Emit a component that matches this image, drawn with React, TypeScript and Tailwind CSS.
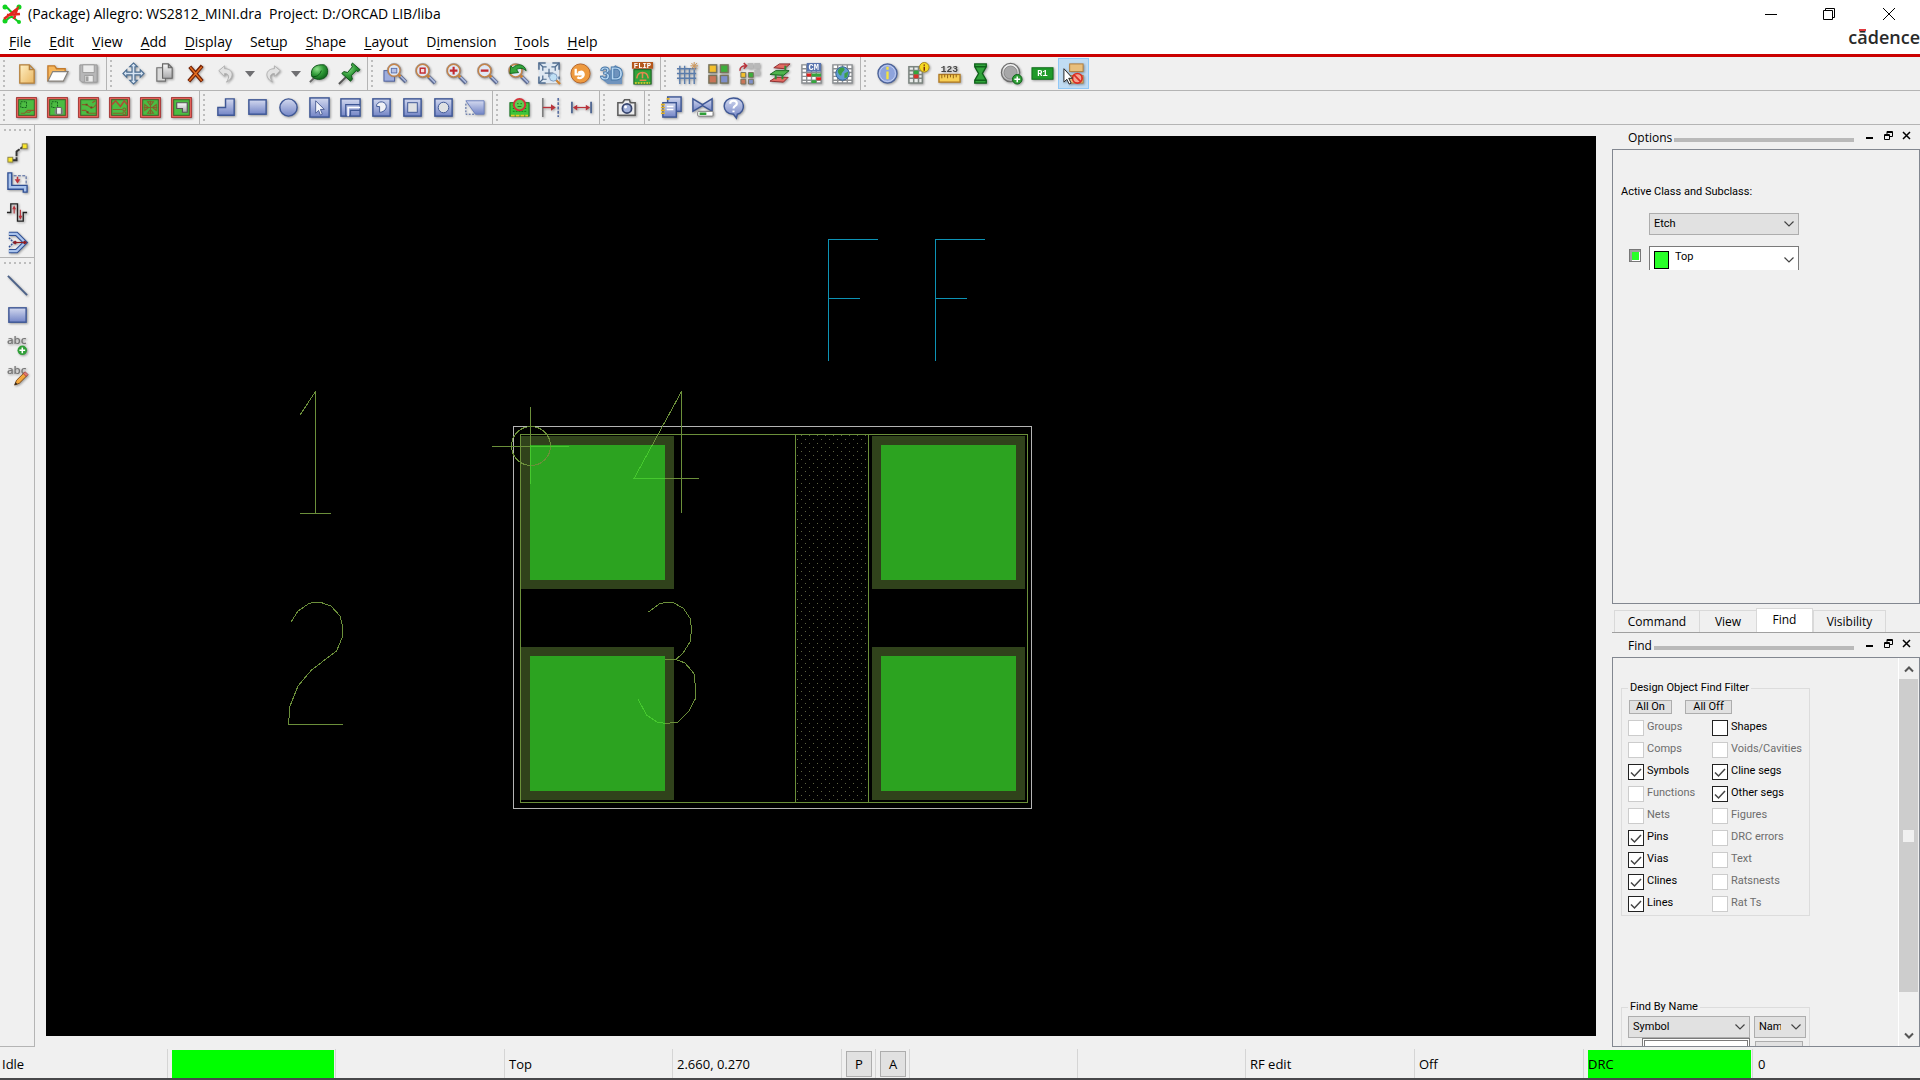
import React from 'react';
import clsx from 'clsx';

const UI = "font-['Open_Sans','Noto_Sans',sans-serif]";
const SMALL = "font-['Roboto','Liberation_Sans',sans-serif]";

/* ---------- icon parts ---------- */

const Defs = () => (
  <svg className="absolute h-0 w-0" aria-hidden="true">
    <defs>
      <linearGradient id="blue" x1="0" y1="0" x2="0" y2="1">
        <stop offset="0" stopColor="#d3d9ef" />
        <stop offset="1" stopColor="#7385c6" />
      </linearGradient>
      <linearGradient id="paper" x1="0" y1="0" x2="1" y2="1">
        <stop offset="0" stopColor="#fff0c4" />
        <stop offset="1" stopColor="#e9b661" />
      </linearGradient>
      <linearGradient id="grey" x1="0" y1="0" x2="0" y2="1">
        <stop offset="0" stopColor="#fafafa" />
        <stop offset="1" stopColor="#a9a9ab" />
      </linearGradient>
      <radialGradient id="leaf" cx="0.35" cy="0.3" r="0.8">
        <stop offset="0" stopColor="#8ee08a" />
        <stop offset="0.5" stopColor="#2f9a37" />
        <stop offset="1" stopColor="#0b5a17" />
      </radialGradient>
      <pattern id="hatch" width="8" height="8" x="801" y="435" patternUnits="userSpaceOnUse">
        <rect width="1" height="1" fill="#5c6140" />
        <rect x="4" y="4" width="1" height="1" fill="#5c6140" />
      </pattern>
      <clipPath id="pads">
        <path d="M530 445h135v135h-135zM530 656h135v135h-135z" />
      </clipPath>
    </defs>
  </svg>
);

const Pcb = ({ children }: { children: React.ReactNode }) => (
  <>
    <rect x="1" y="1" width="22" height="22" rx="1" fill="#8d2c2e" />
    <rect x="2.5" y="2.5" width="19" height="19" fill="none" stroke="#e2625a" strokeWidth="1.6" />
    <rect x="4" y="4" width="16" height="16" fill="#4cbc42" stroke="#2a7a2c" strokeWidth="0.8" />
    {children}
  </>
);

const Lens = ({ children }: { children?: React.ReactNode }) => (
  <>
    <path d="M15 15l7 7" stroke="#5c6a92" strokeWidth="4" />
    <path d="M15 14.5l7 7" stroke="#aebbdd" strokeWidth="1.6" />
    <path d="M13 13l3 3" stroke="#d08330" strokeWidth="3" />
    <circle cx="9" cy="9" r="6.6" fill="#dfe8f5" stroke="#c98545" strokeWidth="1.6" />
    <circle cx="9" cy="9" r="7.5" fill="none" stroke="#8a7a78" strokeWidth="0.6" />
    {children}
  </>
);

const Sheet = () => (
  <path d="M2 3h20v19H2zM2 7h20M2 11h20M2 15h20M2 19h20M7 3v19M12 3v19M17 3v19" fill="#fff" stroke="#8b8f92" strokeWidth="1.5" />
);

const wire = { fill: 'none', stroke: '#86602a', strokeWidth: 1.1 };
const box = { fill: 'url(#blue)', stroke: '#3e5795', strokeWidth: 1.5 };

const icons: Record<string, React.ReactNode> = {
  new: <path d="M5 3h10l5 5v14H5zM15 3v5h5" fill="url(#paper)" stroke="#b5803a" strokeWidth="1.4" />,
  open: (
    <>
      <path d="M2 20V4h7l2 3h9v5" fill="#f6b75c" stroke="#c27a2c" strokeWidth="1.4" />
      <path d="M2 20L7 10h16l-5 10z" fill="#fdfdfd" stroke="#85807a" strokeWidth="1.2" />
    </>
  ),
  save: (
    <>
      <path d="M3 3h18v18H5l-2-2z" fill="#b7b7b8" stroke="#989898" />
      <path d="M6 3h12v8H6zM8 14h9v7H8z" fill="#ececec" stroke="#9c9c9c" />
      <path d="M9 15h3v5H9z" fill="#a0a0a0" />
    </>
  ),
  move: (
    <path
      d="M12 1l4 4h-2.500v5.500H19V8l4 4-4 4v-2.500h-5.500V19H16l-4 4-4-4h2.500v-5.500H5V16l-4-4 4-4v2.500h5.500V5H8z"
      fill="#d7e4f2"
      stroke="#4b6d91"
      strokeWidth="1.2"
    />
  ),
  copy: (
    <>
      <path d="M4 6h9v14H4z" fill="#d9d9d9" stroke="#707070" strokeWidth="1.2" />
      <path d="M10 2h6l4 4v11H10zM16 2v4h4" fill="url(#grey)" stroke="#666" strokeWidth="1.2" />
    </>
  ),
  delete: (
    <>
      <path d="M6 5l13 15M19 4L5 20" stroke="#6f1f04" strokeWidth="4" />
      <path d="M6.500 5.500l12 14M18.500 5L5.500 19.500" stroke="#e36d20" strokeWidth="1.600" />
    </>
  ),
  undo: <path d="M4 9l6-5v3c9 0 11 9 2 14 4-6 2-9-2-9v3z" fill="#e2e2e2" stroke="#b0b0b0" />,
  redo: <path d="M20 9l-6-5v3c-9 0-11 9-2 14-4-6-2-9 2-9v3z" fill="#e2e2e2" stroke="#b0b0b0" />,
  ball: (
    <>
      <path d="M3 21l6-6" stroke="#666" strokeWidth="2" />
      <path d="M5 15C3 6 9 2 18 3c4 2 5 9 1 13-4 3-10 3-14-1z" fill="url(#leaf)" stroke="#0d5417" />
      <path d="M5 15c5 1 8-1 10-6" fill="none" stroke="#0d5417" />
    </>
  ),
  pin: (
    <>
      <path d="M1 23l8-8" stroke="#555" strokeWidth="2" />
      <path d="M15 1l8 7-2 2-2-1-5 5 1 4-2 2L4 12l2-2 4 1 5-6-1-2z" fill="url(#leaf)" stroke="#0d5417" />
    </>
  ),
  zoomFit: (
    <>
      <rect x="1" y="9" width="11" height="11" fill="#9eaddd" stroke="#4c5f9e" />
      <g transform="translate(3 0) scale(.95)">
        <Lens><rect x="6" y="7" width="6" height="5" fill="#b6c1e6" stroke="#5b6fa9" /></Lens>
      </g>
    </>
  ),
  zoomBox: <Lens><rect x="6.500" y="6.500" width="5" height="5" fill="#f3dede" stroke="#c2292f" strokeWidth="1.500" /></Lens>,
  zoomIn: <Lens><path d="M9 5v8M5 9h8" stroke="#c2292f" strokeWidth="2.200" /></Lens>,
  zoomOut: <Lens><path d="M5 9h8" stroke="#c2292f" strokeWidth="2.400" /></Lens>,
  zoomPrev: (
    <Lens>
      <path d="M3 12l1-8 2 2c5-5 12-4 14 3-4-3-7-3-10-1l2 3z" fill="#35a63d" stroke="#11641c" />
    </Lens>
  ),
  zoomCenter: (
    <>
      <rect x="1" y="1" width="21" height="21" fill="#dfe8f1" />
      <path d="M1 8V1h7M15 1h7v7M1 15v7h7M22 15v3" fill="none" stroke="#4f6c8f" strokeWidth="1.600" />
      <path d="M5 9V5h4M14 5h4v4M5 14v4h4M11.500 7v9M7 11.500h9M1 1l4 4M22 1l-4 4M1 22l4-4" fill="none" stroke="#4f6c8f" strokeWidth="1.300" />
      <path d="M18 18l5 5" stroke="#d08330" strokeWidth="2.400" />
      <circle cx="16" cy="16" r="4" fill="#bfe0f5" stroke="#7e9cc0" />
    </>
  ),
  refresh: (
    <>
      <circle cx="12" cy="12" r="10" fill="#ee9a3f" stroke="#b5652a" />
      <path d="M7 7v6h6l-2.200-2.200c4-2 6 2 3 5-2 1.500-4 1-5 0" fill="none" stroke="#fff" strokeWidth="2.400" />
    </>
  ),
  threeD: (
    <>
      <path d="M16 3l7 5v15H8l-6-5z" fill="#6f93bd" />
      <text x="0" y="19" fontSize="19" fontWeight="700" fontFamily="Liberation Sans Narrow, Liberation Sans" fill="#b4d4f0" stroke="#4677a8" strokeWidth="0.900">3D</text>
    </>
  ),
  flip: (
    <>
      <rect x="1" y="0" width="22" height="7" fill="#b5571c" />
      <text x="3" y="6.300" fontSize="7.500" fontWeight="700" fontFamily="Liberation Mono" fill="#fff">FLIP</text>
      <rect x="3" y="8" width="18" height="15" fill="#32a33b" stroke="#0f5d19" />
      <path d="M6 17c1-8 11-8 12 0M12 11v6M9 19h7" fill="none" stroke="#e38a4f" strokeWidth="1.600" />
      <path d="M4 22h16" stroke="#f0d52c" strokeWidth="1.500" strokeDasharray="2 1" />
    </>
  ),
  grid: (
    <>
      <path d="M1 7h20M1 12h20M1 17h20M4 4v19M9 4v19M14 7v16M19 8v15" stroke="#5a7cab" strokeWidth="1.500" />
      <path d="M19 0v8M15 4h8M16 1l6 6M22 1l-6 6" stroke="#cf9557" />
    </>
  ),
  place: (
    <>
      <rect x="2" y="3" width="8" height="8" fill="#f4c02c" stroke="#77735b" strokeWidth="1.500" />
      <rect x="14" y="3" width="8" height="8" fill="#3cae3b" stroke="#77735b" strokeWidth="1.500" />
      <rect x="2" y="14" width="8" height="8" fill="#c97557" stroke="#77735b" strokeWidth="1.500" />
      <rect x="14" y="14" width="8" height="8" fill="#7e8fc9" stroke="#77735b" strokeWidth="1.500" />
    </>
  ),
  placeAuto: (
    <>
      <path d="M10 1h6v6h-6zM17 1h6v6h-6zM17 8h6v6h-6z" fill="#b9b9b9" />
      <path d="M3 11h5v5H3z" fill="#f4c02c" stroke="#77735b" />
      <path d="M11 11h5v5h-5z" fill="#3cae3b" stroke="#77735b" />
      <path d="M3 18h5v5H3z" fill="#c97557" stroke="#77735b" />
      <path d="M11 18h5v5h-5z" fill="#7e8fc9" stroke="#77735b" />
      <path d="M2 9c0-4 3-5 6-5M6 1l3 3-3 3" fill="none" stroke="#b9323a" strokeWidth="1.600" />
    </>
  ),
  layers: (
    <>
      <path d="M1 20l6-4h13l-5 5z" fill="#e26a62" stroke="#8d2c2e" />
      <path d="M1 13l6-4h14l-6 5z" fill="#4fb44d" stroke="#19641f" />
      <path d="M5 6l6-4h11l-6 5z" fill="#e26a62" stroke="#8d2c2e" />
      <path d="M17 4v5M7 13v5M14 13v5" stroke="#2b8b33" strokeWidth="2" />
    </>
  ),
  cm: (
    <>
      <Sheet />
      <rect x="7" y="1" width="15" height="9" fill="#5874ae" />
      <text x="9" y="8.500" fontSize="9" fontWeight="700" fontFamily="Liberation Mono" fill="#fff">CM</text>
      <path d="M7 12h5v3H7zM17 16h5v3h-5z" fill="#e3201b" />
      <path d="M12 12h5v3h-5zM17 12h5v3h-5zM12 19h5v3h-5z" fill="#35a63d" />
    </>
  ),
  globe: (
    <>
      <Sheet />
      <circle cx="12" cy="12" r="7" fill="#5f9bd0" stroke="#345f93" />
      <path d="M7 9c2-4 6-4 7-2s-3 3-3 6-4-1-4-4zM14 12l4-2-1 6-3 1z" fill="#3c9f45" />
    </>
  ),
  info: (
    <>
      <circle cx="12" cy="12" r="10" fill="#8fa4dc" stroke="#4b6298" strokeWidth="1.300" />
      <circle cx="12" cy="12" r="8.300" fill="none" stroke="#c6d1f1" />
      <path d="M12 5v3M12 10v8" stroke="#f7e43c" strokeWidth="2.400" />
    </>
  ),
  report: (
    <>
      <path d="M2 5h14v17H2zM2 9h14M2 13h14M2 17h14M7 5v17M12 5v17" fill="#e9ecea" stroke="#7c8580" strokeWidth="1.600" />
      <path d="M7 9h5v4H7z" fill="#35a63d" />
      <path d="M7 13h5v4H7z" fill="#d8352d" />
      <circle cx="18" cy="5.500" r="5" fill="#f5d921" stroke="#a7861a" />
      <path d="M18 2.500v1.500M18 5v4" stroke="#7a2b0a" strokeWidth="1.500" />
    </>
  ),
  measure: (
    <>
      <text x="3" y="10" fontSize="10" fontWeight="700" fontFamily="Liberation Mono" fill="#444">123</text>
      <rect x="1" y="13" width="22" height="8" fill="#f7cf55" stroke="#b07a24" strokeWidth="1.400" />
      <path d="M4 13v4M7 13v3M10 13v4M13 13v3M16 13v4M19 13v3" stroke="#8f5c13" />
    </>
  ),
  hourglass: (
    <path d="M6 2h12v3l-4 7 4 7v3H6v-3l4-7-4-7zM6 5h12M6 19h12" fill="#31a43b" stroke="#0e6119" strokeWidth="1.400" />
  ),
  addVia: (
    <>
      <circle cx="11" cy="11" r="9.500" fill="url(#grey)" stroke="#6d6d6d" strokeWidth="1.400" />
      <circle cx="11" cy="11" r="6.800" fill="#a7a7a8" stroke="#8b8b8b" />
      <circle cx="18" cy="18" r="5" fill="#2f9f37" stroke="#0e6119" />
      <path d="M18 15v6M15 18h6" stroke="#fff" strokeWidth="1.600" />
    </>
  ),
  r1: (
    <>
      <rect x="1" y="6" width="22" height="12" fill="#1f9a2a" stroke="#0f6b19" />
      <text x="6.500" y="15" fontSize="9" fontWeight="700" fontFamily="Liberation Mono" fill="#fff">R1</text>
    </>
  ),
  waive: (
    <>
      <rect x="8" y="2" width="14" height="8" fill="#e8bf7d" stroke="#b17d3b" />
      <rect x="8" y="14" width="14" height="8" fill="#e8bf7d" stroke="#b17d3b" />
      <circle cx="16" cy="17" r="5" fill="#f4a390" stroke="#dc2c22" strokeWidth="1.800" />
      <path d="M12.500 13.500l7 7" stroke="#dc2c22" strokeWidth="1.800" />
      <path d="M2 7v14l3-3 2.500 5 2-1L7 17h4z" fill="#fff" stroke="#222" />
    </>
  ),
  pcb1: <Pcb><path d="M6 6h6v6H6z" fill="none" stroke="#14601c" strokeDasharray="2 1" /><path d="M6 18h4l3-3h7M12 17h3l2-2" {...wire} /></Pcb>,
  pcb2: (
    <Pcb>
      <path d="M6 6h6v6H6z" fill="none" stroke="#14601c" strokeDasharray="2 1" />
      <path d="M9 14h9v5H9z" fill="#7c8a80" />
      <path d="M11 12h5v7h-5z" fill="#eee" stroke="#666" />
    </Pcb>
  ),
  pcb3: <Pcb><path d="M5 9h5l4 3h3l3-3M5 15h4l3 3h8M16 7l3-2" {...wire} /><path d="M9 8h2v2H9zM14 11h2v2h-2zM10 16h2v2h-2z" fill="#74401d" /></Pcb>,
  pcb4: <Pcb><path d="M4 9l4-4 5 6 4-6 3 4" fill="none" stroke="#b04a34" strokeWidth="1.600" /><path d="M5 14h10M5 18h10" {...wire} /><circle cx="17" cy="14" r="1.500" {...wire} /><circle cx="17" cy="18" r="1.500" {...wire} /></Pcb>,
  pcb5: <Pcb><path d="M12 5v14M5 12h14M9 6h6l-3 4zM9 18h6l-3-4zM6 9v6l4-3zM18 9v6l-4-3z" {...wire} /></Pcb>,
  pcb6: <Pcb><path d="M7 7h11v10h-5v-4H7z" fill="url(#grey)" stroke="#555" strokeWidth="1.200" /></Pcb>,
  poly: <path d="M11 3h9v17H3v-8h8z" {...box} />,
  rect: <rect x="3" y="4" width="18" height="15" {...box} />,
  circle: <circle cx="12" cy="12" r="9" {...box} />,
  select: <><rect x="2" y="2" width="20" height="20" {...box} /><path d="M8 5v13l3-3 2 5 2-1-2-5h4z" fill="#f4f6fb" stroke="#4c5f96" /></>,
  trace: <><rect x="2" y="3" width="20" height="18" {...box} /><path d="M7 21V9h15M12 21v-6h10" fill="none" stroke="#3e5795" strokeWidth="1.200" /><path d="M9.500 21v-9H22" fill="none" stroke="#fff" strokeWidth="1.600" /></>,
  voidPoly: <><rect x="3" y="3" width="18" height="18" {...box} /><path d="M7 9c3-5 10-3 10 2 0 4-4 6-7 6v-6H7z" fill="#f1f2f6" stroke="#3e5795" /></>,
  voidRect: <><rect x="3" y="3" width="18" height="18" {...box} /><rect x="7" y="7" width="10" height="10" fill="#dfe1e3" stroke="#3e5795" /></>,
  voidCircle: <><rect x="3" y="3" width="18" height="18" {...box} /><circle cx="12" cy="12" r="5.500" fill="#dfe1e3" stroke="#3e5795" /></>,
  chamfer: <><path d="M3 5h19v14h-9z" fill="url(#blue)" stroke="#6b80bd" /><path d="M3 8v11h9" fill="none" stroke="#3e5795" strokeDasharray="2 1.500" /></>,
  drcBoard: (
    <>
      <rect x="2" y="7" width="20" height="14" fill="#3fc43b" stroke="#0f6b19" />
      <path d="M5 10h14M5 13h14M5 16h14" stroke="#118018" strokeDasharray="2 1" />
      <path d="M3 20.500h18" stroke="#e8c62b" strokeWidth="2" strokeDasharray="4 1" />
      <circle cx="12" cy="9" r="6" fill="#5fcd50" stroke="#d5313a" strokeWidth="2" />
      <path d="M9.500 8h1.500M13 8h1.500M10 11h4" stroke="#118018" />
    </>
  ),
  spacing: (
    <>
      <path d="M4 2v20" stroke="#6b6b6b" strokeWidth="1.400" />
      <path d="M20 2v20" stroke="#3e5795" strokeWidth="1.400" strokeDasharray="3 1.500" />
      <path d="M4 12h10" stroke="#b9323a" strokeWidth="1.400" />
      <path d="M12.500 8.500l5 3.500-5 3.500z" fill="#b9323a" />
    </>
  ),
  width: (
    <>
      <path d="M2 6v12M22 6v12" stroke="#4a628f" strokeWidth="1.800" />
      <path d="M5 12h14" stroke="#b9323a" strokeWidth="1.200" />
      <path d="M7.500 9L3 12l4.500 3zM16.500 9l4.500 3-4.500 3z" fill="#b9323a" />
    </>
  ),
  camera: (
    <>
      <path d="M3 7h5l2-3h5l1 3h5v13H3z" fill="#ececed" stroke="#5c5c5c" strokeWidth="1.600" />
      <circle cx="12.500" cy="13" r="4.800" fill="#a2b1da" stroke="#38466e" strokeWidth="1.800" />
      <circle cx="11" cy="11.500" r="1.500" fill="#fff" />
    </>
  ),
  books: (
    <>
      <rect x="8" y="1" width="14" height="15" {...box} />
      <rect x="3" y="7" width="14" height="15" {...box} />
      <path d="M7 11h7M7 14h7" stroke="#fff" strokeWidth="1.500" />
      <path d="M1 9h4M1 12h4M1 15h4M1 18h4M7 3h3" stroke="#e5b320" strokeWidth="1.600" />
    </>
  ),
  bowtie: (
    <>
      <path d="M2 3l10 6 10-6v13l-10-6-10 6z" {...box} />
      <rect x="7" y="16" width="16" height="5" rx="1" fill="#fff" stroke="#777" />
      <path d="M9 18.500h7" stroke="#2f9f37" strokeWidth="2.600" />
    </>
  ),
  help: (
    <>
      <path d="M12 2c13 0 13 15 4 17l-1 4-3-4C-1 19-1 2 12 2z" {...box} />
      <path d="M8.500 8c0-4 7-4 7 0 0 2-3.500 2-3.500 5M12 15v2" fill="none" stroke="#fff" strokeWidth="2.200" />
    </>
  ),
  connect: (
    <>
      <path d="M5 20h6v-9l8-6" fill="none" stroke="#333" strokeWidth="2" strokeDasharray="9 1" />
      <rect x="2" y="17" width="5" height="5" fill="#f9e62b" stroke="#8c8345" />
      <rect x="17" y="3" width="5" height="5" fill="#f9e62b" stroke="#8c8345" />
    </>
  ),
  slide: (
    <>
      <path d="M8 5h13v10" fill="none" stroke="#3e5795" strokeDasharray="3 1.500" />
      <path d="M2 2h4v13h16v7h-4v-3H2z" fill="#a9c3ec" stroke="#2f4f94" strokeWidth="1.400" />
      <path d="M12 6v3" stroke="#b9323a" strokeWidth="1.600" />
      <path d="M9 8.500h6L12 13z" fill="#b9323a" />
    </>
  ),
  delay: (
    <>
      <path d="M1 12h4V3h7v18h6v-9h4" fill="none" stroke="#222" strokeWidth="1.400" />
      <path d="M8.500 13V7M15 9v8" stroke="#b9323a" strokeWidth="1.200" />
      <path d="M6.500 8.500l2-4 2 4zM13 15.500l2 4 2-4z" fill="#b9323a" />
    </>
  ),
  miter: (
    <>
      <path d="M3 3h8l9 9-9 9H3" fill="none" stroke="#2f4f94" strokeWidth="4.600" />
      <path d="M3 3h8l9 9-9 9H3" fill="none" stroke="#a9c3ec" strokeWidth="2.400" />
      <path d="M3 7l5 5-5 5" fill="none" stroke="#2f4f94" strokeWidth="1.500" strokeDasharray="2 1" />
      <path d="M9 12h10" stroke="#8d1d24" strokeWidth="1.200" />
      <path d="M7 12l2.500-2 2.500 2-2.500 2zM17 12l2.500-2 2.500 2-2.500 2z" fill="#8d1d24" />
    </>
  ),
  line: <path d="M2 2l20 20" stroke="#4b6188" strokeWidth="2" />,
  textAdd: (
    <>
      <text x="1" y="10" fontSize="12" fontFamily="Open Sans" fontWeight="600" fill="#777">abc</text>
      <circle cx="17" cy="17" r="5" fill="#2f9f37" />
      <path d="M17 14v6M14 17h6" stroke="#fff" strokeWidth="1.600" />
    </>
  ),
  textEdit: (
    <>
      <text x="1" y="10" fontSize="12" fontFamily="Open Sans" fontWeight="600" fill="#777">abc</text>
      <path d="M9 22l2-5 8-8 3 3-8 8z" fill="#f3a73b" stroke="#7c4b1c" />
      <path d="M9 22l1-3 2 2z" fill="#222" />
      <path d="M18 10l2-2 3 3-2 2z" fill="#e0766f" stroke="#8d2c2e" strokeWidth="0.600" />
    </>
  ),
};

/* ---------- toolbars ---------- */

const ToolButton = ({ name, active, side }: { name: string; active?: boolean; side?: boolean }) => {
  if (name === 'menu') {
    return (
      <button type="button" aria-label="history" className="flex w-[15px] items-center justify-center">
        <span className="border-x-[5px] border-t-[6px] border-x-transparent border-t-[#6f6f72]" />
      </button>
    );
  }
  return (
    <button
      type="button"
      aria-label={name}
      className={clsx(
        'flex w-[31px] items-center justify-center',
        side ? 'h-[30px]' : 'h-[31px]',
        active && 'border border-[#90c8f6] bg-[#c0dcf3]',
      )}
    >
      <svg viewBox="0 0 24 24" className="h-[23px] w-[23px] shrink-0 overflow-visible drop-shadow-[1px_1px_1px_rgba(0,0,0,0.35)]">
        {icons[name]}
      </svg>
    </button>
  );
};

const ToolGroup = ({ items, last }: { items: string[]; last?: boolean }) => (
  <div className={clsx('flex items-center pr-0.5', !last && 'border-r border-[#b4b4b4]')}>
    <div className="flex w-[11px] flex-col gap-[3px] pl-[3px]">
      {[0, 1, 2, 3, 4, 5].map((i) => (
        <span key={i} className="h-[2px] w-[2px] bg-[#bdbdbd]" />
      ))}
    </div>
    {items.map((name, i) => (
      <ToolButton key={i} name={name} active={name === 'waive'} />
    ))}
  </div>
);

const topGroups = [
  ['new', 'open', 'save'],
  ['move', 'copy', 'delete', 'undo', 'menu', 'redo', 'menu', 'ball', 'pin'],
  ['zoomFit', 'zoomBox', 'zoomIn', 'zoomOut', 'zoomPrev', 'zoomCenter', 'refresh', 'threeD', 'flip'],
  ['grid', 'place', 'placeAuto', 'layers', 'cm', 'globe'],
  ['info', 'report', 'measure', 'hourglass', 'addVia', 'r1', 'waive'],
];

const secondGroups = [
  ['pcb1', 'pcb2', 'pcb3', 'pcb4', 'pcb5', 'pcb6'],
  ['poly', 'rect', 'circle', 'select', 'trace', 'voidPoly', 'voidRect', 'voidCircle', 'chamfer'],
  ['drcBoard', 'spacing', 'width'],
  ['camera'],
  ['books', 'bowtie', 'help'],
];

const Toolbar = ({ groups }: { groups: string[][] }) => (
  <div className="flex h-[34px] border-b border-[#b4b4b4]">
    {groups.map((items, i) => (
      <ToolGroup key={i} items={items} last={i === groups.length - 1} />
    ))}
  </div>
);

const SideGroup = ({ items, className }: { items: string[]; className?: string }) => (
  <div className={clsx('flex flex-col items-center', className)}>
    <div className="mb-1.5 flex gap-[3px] pt-1">
      {[0, 1, 2, 3, 4, 5].map((i) => (
        <span key={i} className="h-[2px] w-[2px] bg-[#bdbdbd]" />
      ))}
    </div>
    {items.map((name) => (
      <ToolButton key={name} name={name} side />
    ))}
  </div>
);

/* ---------- header ---------- */

const menus: [string, string, string][] = [
  ['', 'F', 'ile'],
  ['', 'E', 'dit'],
  ['', 'V', 'iew'],
  ['', 'A', 'dd'],
  ['', 'D', 'isplay'],
  ['Set', 'u', 'p'],
  ['', 'S', 'hape'],
  ['', 'L', 'ayout'],
  ['D', 'i', 'mension'],
  ['', 'T', 'ools'],
  ['', 'H', 'elp'],
];

const Header = () => (
  <header className="bg-white">
    <div className="flex h-[28px] items-center">
      <svg viewBox="0 0 20 20" className="mr-1.5 ml-0.5 h-5 w-5">
        <path d="M2 3c6 0 4 4 8 5s5-5 8-4M2 17c4 0 4-5 8-4s4 5 8 5" fill="none" stroke="#12c21f" strokeWidth="2" />
        <circle cx="3" cy="3" r="2.500" fill="#12d321" />
        <circle cx="17" cy="3" r="2.500" fill="#12d321" />
        <circle cx="3" cy="17" r="2.500" fill="#12d321" />
        <circle cx="17" cy="18" r="2" fill="#12d321" />
        <path d="M2 15L15 5l-3 10M5 11l13-1" fill="none" stroke="#e3261f" strokeWidth="2.600" />
      </svg>
      <h1 className="flex-1 text-[14px] leading-5 whitespace-pre">(Package) Allegro: WS2812_MINI.dra  Project: D:/ORCAD LIB/liba</h1>
      <button type="button" aria-label="Minimize" className="flex h-7 w-[58px] items-center justify-center">
        <svg viewBox="0 0 14 14" className="h-3.5 w-3.5"><path d="M1 7.500h12" stroke="#000" /></svg>
      </button>
      <button type="button" aria-label="Restore" className="flex h-7 w-[58px] items-center justify-center">
        <svg viewBox="0 0 14 14" className="h-3.5 w-3.5">
          <path d="M1.500 3.500h9v9h-9zM3.500 3.500v-2h9v9h-2" fill="none" stroke="#000" />
        </svg>
      </button>
      <button type="button" aria-label="Close" className="flex h-7 w-[62px] items-center justify-center">
        <svg viewBox="0 0 14 14" className="h-3.5 w-3.5"><path d="M1 1l12 12M13 1L1 13" stroke="#000" /></svg>
      </button>
    </div>
    <div className="flex h-[29px] justify-between border-b-[3px] border-[#cb0000]">
      <nav className="flex">
        {menus.map(([before, key, after]) => (
          <button key={before + key + after} type="button" className="h-7 px-[9px] text-[14px] leading-7">
            {before}
            <u className="underline-offset-2">{key}</u>
            {after}
          </button>
        ))}
      </nav>
      <div className="relative h-5 font-['Open_Sans',sans-serif] text-[18px] leading-[18px] font-semibold text-[#2a2a2a]">
        cādence
        <span className="absolute top-px left-[11px] h-[2px] w-[7px] bg-[#e0393e]" />
      </div>
    </div>
  </header>
);

/* ---------- canvas ---------- */

const TWO = 'M291 622L298 611 309 603.500 316 602 321 602.500 331 606 340 616 342.500 626 342 638 336.500 651 311.500 670 298 686 290 706 288.500 724.500H343';
const THREE =
  'M648.500 612L660 603.500 668 602 673 602.500 683.500 608.500 690.500 619 691.500 630 690 642 683 653 676 659.500H664.500M676 659.500L685 663 694 673.500 695.500 687V698.500L689 711 678 722 666.500 723.500 657 722 646.500 715 638 699';
const FOUR = 'M681.500 513V391.500L634 478.500H699';
const CROSS = 'M530.500 407V484M492 446.500H569';

const Board = () => (
  <svg viewBox="46 136 1550 900" className="block h-full w-full bg-black" shapeRendering="crispEdges" fill="none">
    <path d="M521 436h153v153H521zM872 436h153v153H872zM521 647h153v153H521zM872 647h153v153H872z" fill="#30421b" />
    <path d="M530 445h135v135H530zM881 445h135v135H881zM530 656h135v135H530zM881 656h135v135H881z" fill="#2ca320" />
    <rect x="796" y="435" width="72" height="367" fill="url(#hatch)" />
    <rect x="513.500" y="426.500" width="518" height="382" stroke="#b4b4b4" />
    <g stroke="#6b8f3a">
      <rect x="520.500" y="434.500" width="507" height="368" />
      <path d="M795.500 434V802M868.500 434V802" />
      <path d="M300 415L315.500 391.500V513.500M300 513.500H331" />
      <path d={TWO} />
      <path d={THREE} />
      <path d={FOUR} />
      <path d={CROSS} />
      <circle cx="531" cy="446" r="19.500" />
    </g>
    <g stroke="#46c82e" clipPath="url(#pads)">
      <path d={THREE} />
      <path d={FOUR} />
      <path d={CROSS} />
    </g>
    <path d="M878 239.500H828.500V361M828.500 298.500H860M985 239.500H935.500V361M935.500 298.500H967" stroke="#0d93b5" />
  </svg>
);

/* ---------- right dock ---------- */

const DockTitle = ({ title }: { title: string }) => (
  <div className="flex h-6 shrink-0 items-center pt-0.5 pr-[9px] pl-4">
    <h2 className="text-[12px] leading-4">{title}</h2>
    <span className="mt-1 ml-0.5 h-1 flex-1 bg-[#b9b9b9]" />
    <div className="ml-3 flex w-[45px] items-center justify-between pb-1.5">
      <button type="button" aria-label="Hide">
        <svg viewBox="0 0 8 8" className="h-2 w-2"><path d="M0 7h7" stroke="#000" strokeWidth="2" /></svg>
      </button>
      <button type="button" aria-label="Float">
        <svg viewBox="0 0 9 9" className="h-[9px] w-[9px]">
          <path d="M.5 3.500h5v5h-5zM.5 4.500h5M3 3V.5h5.500v5H6M3 1.500h5" fill="none" stroke="#000" />
        </svg>
      </button>
      <button type="button" aria-label="Close">
        <svg viewBox="0 0 9 9" className="h-[9px] w-[9px]"><path d="M1 1l7 7M8 1L1 8" stroke="#000" strokeWidth="1.500" /></svg>
      </button>
    </div>
  </div>
);

const Chevron = ({ className }: { className: string }) => (
  <svg viewBox="0 0 10 6" className={clsx('pointer-events-none absolute h-1.5 w-2.5', className)}>
    <path d="M.5.5L5 5 9.500.5" fill="none" stroke="#444" strokeWidth="1.200" />
  </svg>
);

const Combo = ({ label, value, className }: { label: string; value: string; className: string }) => (
  <div className={clsx('relative h-[22px]', className)}>
    <select aria-label={label} className="h-full w-full appearance-none border border-[#adadad] bg-[#e1e1e1] pr-6 pl-1">
      <option>{value}</option>
    </select>
    <Chevron className="top-2 right-[5px]" />
  </div>
);

interface FilterItem {
  label: string;
  enabled?: boolean;
  checked?: boolean;
}

const filters: FilterItem[] = [
  { label: 'Groups' },
  { label: 'Shapes', enabled: true },
  { label: 'Comps' },
  { label: 'Voids/Cavities' },
  { label: 'Symbols', enabled: true, checked: true },
  { label: 'Cline segs', enabled: true, checked: true },
  { label: 'Functions' },
  { label: 'Other segs', enabled: true, checked: true },
  { label: 'Nets' },
  { label: 'Figures' },
  { label: 'Pins', enabled: true, checked: true },
  { label: 'DRC errors' },
  { label: 'Vias', enabled: true, checked: true },
  { label: 'Text' },
  { label: 'Clines', enabled: true, checked: true },
  { label: 'Ratsnests' },
  { label: 'Lines', enabled: true, checked: true },
  { label: 'Rat Ts' },
];

const Filter = ({ label, enabled, checked }: FilterItem) => (
  <label className={clsx('flex h-[22px] items-center gap-[3px] whitespace-nowrap', !enabled && 'text-[#6d6d6d]')}>
    <span className="relative h-4 w-4">
      <input
        type="checkbox"
        defaultChecked={checked}
        disabled={!enabled}
        className="peer block h-4 w-4 appearance-none border border-[#222] bg-white disabled:border-[#ccc]"
      />
      <svg viewBox="0 0 16 16" className="pointer-events-none absolute inset-0 hidden h-4 w-4 peer-checked:block">
        <path d="M3 8.500l3.500 3.500L13 5" fill="none" stroke="#444" strokeWidth="1.500" />
      </svg>
    </span>
    <span className="pb-0.5">{label}</span>
  </label>
);

const tabs = [
  { label: 'Command', className: 'w-[86px]' },
  { label: 'View', className: 'w-[58px]' },
  { label: 'Find', className: 'w-[57px]', active: true },
  { label: 'Visibility', className: 'w-[73px]' },
];

const RightDock = () => (
  <aside className="mb-0.5 flex w-[308px] shrink-0 flex-col">
    <DockTitle title="Options" />
    <section className={clsx('min-h-0 flex-[419] border border-[#828790] px-2 pt-[35px] text-[11px] leading-[14px]', SMALL)}>
      <p>Active Class and Subclass:</p>
      <Combo label="Class" value="Etch" className="mt-3.5 ml-7 w-[150px]" />
      <div className="mt-[11px] flex items-start">
        <button type="button" aria-label="Colour" className="mt-[3px] ml-2 h-[13px] w-3 border border-[#777] bg-[#28ff28] shadow-[inset_2px_2px_0_#a0a0a0,inset_-1px_-1px_0_#fff]" />
        <div className="relative ml-2 h-6 w-[150px]">
          <select aria-label="Subclass" className="h-full w-full appearance-none border border-b-0 border-[#7a7a7a] bg-white pb-1 pl-[25px]">
            <option>Top</option>
          </select>
          <span className="pointer-events-none absolute top-[5px] left-[5px] h-[18px] w-[15px] border border-black bg-[#28ff28]" />
          <Chevron className="top-[11px] right-[5px]" />
        </div>
      </div>
    </section>
    <div className="flex h-[29px] shrink-0 items-end border-b border-[#a0a0a0] pl-0.5 text-[12px]">
      {tabs.map(({ label, className, active }) => (
        <button
          key={label}
          type="button"
          className={clsx(
            'border border-b-0 border-[#d9d9d9]',
            className,
            active ? 'h-[24px] bg-white pb-px' : '-mr-px h-[22px] pt-px',
          )}
        >
          {label}
        </button>
      ))}
    </div>
    <DockTitle title="Find" />
    <section className={clsx('flex min-h-0 flex-[388] border border-[#828790] text-[11px] leading-[14px]', SMALL)}>
      <div className="flex-1 overflow-hidden pt-[23px] pl-2">
        <fieldset className="w-[189px] border border-[#dcdcdc] pb-0 pl-1.5">
          <legend className="px-0.5">Design Object Find Filter</legend>
          <div className="flex gap-[13px] pt-[5px] pb-[3px] pl-px leading-3">
            <button type="button" className="h-3.5 w-[43px] border border-[#adadad] bg-[#e1e1e1]">All On</button>
            <button type="button" className="h-3.5 w-[47px] border border-[#adadad] bg-[#e1e1e1]">All Off</button>
          </div>
          <div className="grid grid-cols-[84px_1fr]">
            {filters.map((item) => (
              <Filter key={item.label} {...item} />
            ))}
          </div>
        </fieldset>
        <fieldset className="mt-[84px] h-[80px] w-[189px] border border-[#dcdcdc] pl-1.5">
          <legend className="px-0.5">Find By Name</legend>
          <div className="flex gap-1 pt-0.5">
            <Combo label="Object type" value="Symbol" className="w-[122px]" />
            <Combo label="Find by" value="Name" className="w-[52px]" />
          </div>
          <div className="flex items-start pl-3.5">
            <input aria-label="Name" className="h-5 w-[108px] border-[3px] border-double border-[#7a7a7a] bg-white" />
            <button type="button" aria-label="More" className="mt-[3px] ml-[5px] h-5 w-12 border border-[#adadad] bg-[#e1e1e1]" />
          </div>
        </fieldset>
      </div>
      <div className="flex w-[21px] flex-col border-l border-white pr-px">
        <button type="button" aria-label="Scroll up" className="flex h-[21px] items-center justify-center">
          <svg viewBox="0 0 10 8" className="h-2 w-2.5"><path d="M1 6.500l4-4 4 4" fill="none" stroke="#555" strokeWidth="2" /></svg>
        </button>
        <div className="flex flex-[313] items-center justify-center bg-[#cdcdcd]">
          <span className="h-3 w-[11px] bg-[#f0f0f0]" />
        </div>
        <div className="flex-[33]" />
        <button type="button" aria-label="Scroll down" className="flex h-[21px] items-center justify-center">
          <svg viewBox="0 0 10 8" className="h-2 w-2.5"><path d="M1 1.500l4 4 4-4" fill="none" stroke="#555" strokeWidth="2" /></svg>
        </button>
      </div>
    </section>
  </aside>
);

/* ---------- status bar ---------- */

const Cell = ({ children, grow = 'flex-[169]' }: { children?: React.ReactNode; grow?: string }) => (
  <div className={clsx('flex min-w-0 items-center border-r border-[#d5d5d5]', grow)}>{children}</div>
);

const statusButton = 'mr-[3px] ml-1 h-[26px] w-[26px] border border-[#adadad] bg-[#e1e1e1]';

const StatusBar = () => (
  <footer className="flex h-[31px] shrink-0 border-b-2 border-[#48484a] text-[13px] leading-4">
    <Cell grow="flex-[168]"><span className="pl-0.5">Idle</span></Cell>
    <Cell grow="flex-[168]"><span className="mt-px mr-px ml-1 h-7 flex-1 bg-[#00ff00]" /></Cell>
    <Cell />
    <Cell grow="flex-[168]"><span className="pl-1">Top</span></Cell>
    <Cell><span className="pl-1">2.660, 0.270</span></Cell>
    <Cell grow="w-[34px]"><button type="button" className={statusButton}>P</button></Cell>
    <Cell grow="w-[34px]"><button type="button" className={statusButton}>A</button></Cell>
    <Cell grow="flex-[168]" />
    <Cell grow="flex-[168]" />
    <Cell><span className="pl-1">RF edit</span></Cell>
    <Cell><span className="pl-1">Off</span></Cell>
    <Cell><span className="mt-px mr-px ml-1 h-7 flex-1 bg-[#00ff00] leading-7">DRC</span></Cell>
    <div className="flex min-w-0 flex-[168] items-center"><span className="pl-[5px]">0</span></div>
  </footer>
);

export default function App() {
  return (
    <div className={clsx('flex h-screen flex-col overflow-hidden bg-[#f0f0f0] text-black', UI)}>
      <Defs />
      <Header />
      <Toolbar groups={topGroups} />
      <Toolbar groups={secondGroups} />
      <main className="flex min-h-0 flex-1">
        <div className="mb-0.5 flex w-[35px] shrink-0 flex-col border-r border-b border-[#b4b4b4]">
          <SideGroup items={['connect', 'slide', 'delay', 'miter']} className="border-b border-[#b4b4b4]" />
          <SideGroup items={['line', 'rect', 'textAdd', 'textEdit']} />
        </div>
        <div className="mt-[11px] mr-4 mb-[13px] ml-[11px] min-w-0 flex-1 bg-black">
          <Board />
        </div>
        <RightDock />
      </main>
      <StatusBar />
    </div>
  );
}
